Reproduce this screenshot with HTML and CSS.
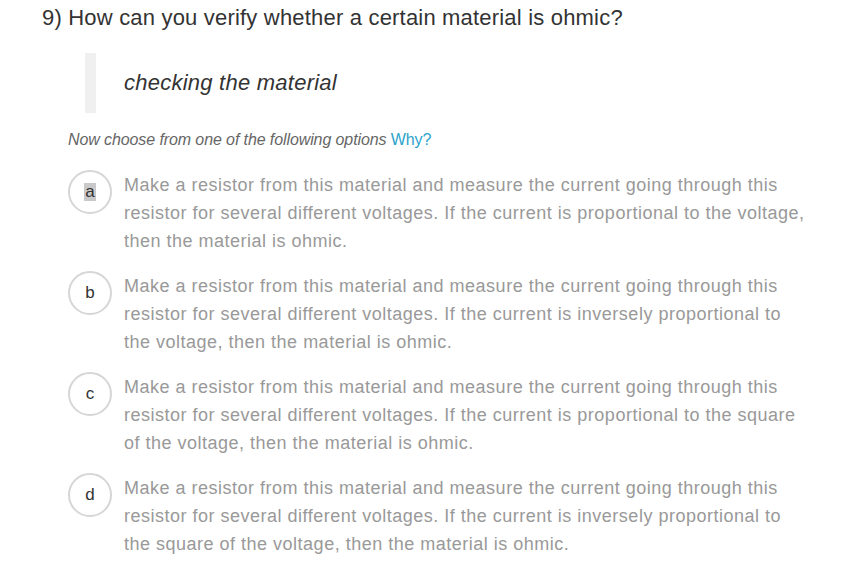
FILE: index.html
```html
<!DOCTYPE html>
<html lang="en">
<head>
    <meta charset="UTF-8">
    <meta name="viewport" content="width=device-width, initial-scale=1.0">
    <title>Question 9</title>
    <link rel="stylesheet" href="styles.css">
</head>
<body>
    <div class="question">
        <h1>9) How can you verify whether a certain material is ohmic?</h1>

        <blockquote class="answer">checking the material</blockquote>

        <p class="prompt">Now choose from one of the following options <a href="#" class="why">Why?</a></p>

        <div class="options">
            <div class="option">
                <div class="letter"><span class="selected">a</span></div>
                <p>Make a resistor from this material and measure the current going through this resistor for several different voltages. If the current is proportional to the voltage, then the material is ohmic.</p>
            </div>
            <div class="option">
                <div class="letter">b</div>
                <p>Make a resistor from this material and measure the current going through this resistor for several different voltages. If the current is inversely proportional to the voltage, then the material is ohmic.</p>
            </div>
            <div class="option">
                <div class="letter">c</div>
                <p>Make a resistor from this material and measure the current going through this resistor for several different voltages. If the current is proportional to the square of the voltage, then the material is ohmic.</p>
            </div>
            <div class="option">
                <div class="letter">d</div>
                <p>Make a resistor from this material and measure the current going through this resistor for several different voltages. If the current is inversely proportional to the square of the voltage, then the material is ohmic.</p>
            </div>
        </div>
    </div>
</body>
</html>
```

FILE: styles.css
```css
body {
    font-family: 'Liberation Sans', Arial, sans-serif;
    margin: 0;
    background: #fff;
    color: #333;
}
.question {
    padding: 5px 0 0 42px;
}
h1 {
    font-size: 22px;
    font-weight: normal;
    line-height: 26px;
    letter-spacing: 0.19px;
    margin: 0;
    color: #333;
}
.answer {
    margin: 22px 0 0 43px;
    padding: 17px 0 17px 28px;
    border-left: 11px solid #f0f0f0;
    font-size: 22px;
    line-height: 26px;
    letter-spacing: 0.24px;
    font-style: italic;
    color: #333;
}
.prompt {
    margin: 17px 0 0 26px;
    font-size: 16px;
    line-height: 20px;
    letter-spacing: -0.1px;
    font-style: italic;
    color: #666;
}
.why {
    font-style: normal;
    color: #2ba3cb;
    text-decoration: none;
}
.options {
    margin: 21px 0 0 26px;
    display: flex;
    flex-direction: column;
    gap: 17px;
}
.option {
    display: flex;
    align-items: flex-start;
    gap: 12px;
}
.letter {
    flex: none;
    width: 40px;
    height: 40px;
    margin-top: -1px;
    border: 2px solid #d6d6d6;
    border-radius: 50%;
    display: flex;
    align-items: center;
    justify-content: center;
    font-size: 17px;
    color: #333;
}
.selected {
    background: #c9c9c9;
    line-height: 18px;
    padding: 0 1px;
}
.option p {
    margin: 0;
    width: 684px;
    font-size: 18px;
    line-height: 28px;
    letter-spacing: 0.5px;
    color: #999;
}
```
